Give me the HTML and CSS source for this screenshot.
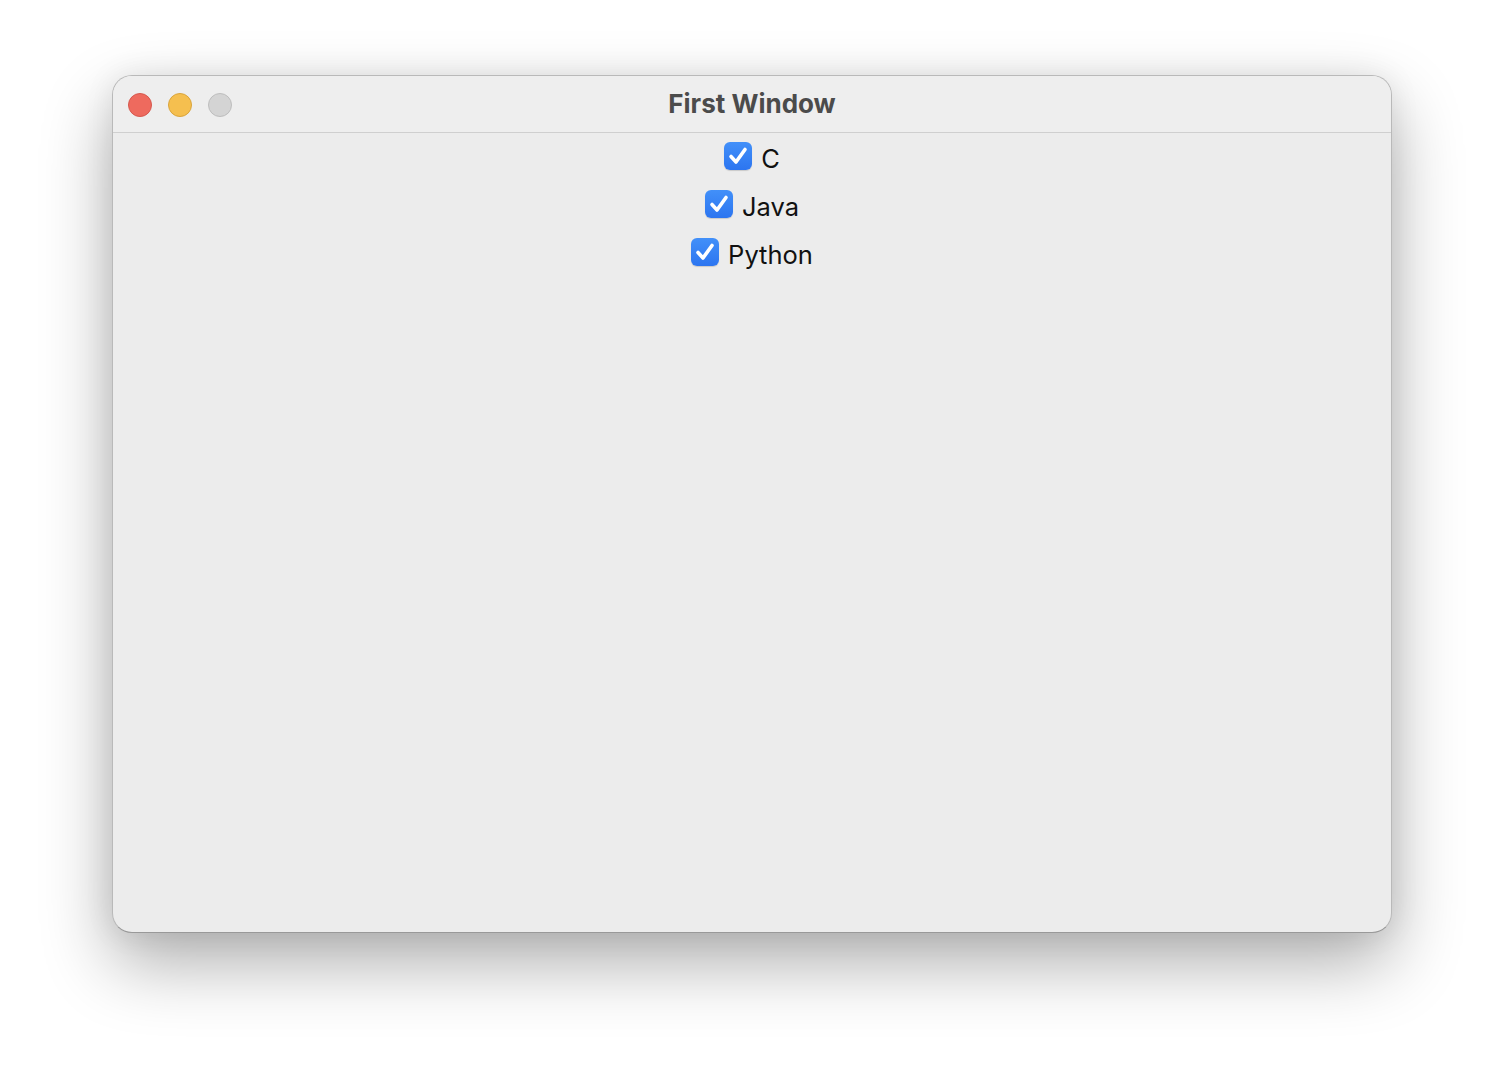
FILE: index.html
```html
<!DOCTYPE html>
<html lang="en">
<head>
    <meta charset="UTF-8">
    <title>First Window</title>
    <link rel="stylesheet" href="styles.css">
</head>
<body>
    <div class="window">
        <div class="titlebar">
            <div class="lights">
                <span class="light close"></span>
                <span class="light min"></span>
                <span class="light zoom"></span>
            </div>
            <div class="title">First Window</div>
        </div>
        <div class="content">
            <label class="check">
                <span class="box"><svg viewBox="0 0 28 28" width="28" height="28"><path d="M7 14.5 L12 20 L21 7.5" fill="none" stroke="#fff" stroke-width="3.6" stroke-linecap="round" stroke-linejoin="round"/></svg></span>
                <span class="label">C</span>
            </label>
            <label class="check">
                <span class="box"><svg viewBox="0 0 28 28" width="28" height="28"><path d="M7 14.5 L12 20 L21 7.5" fill="none" stroke="#fff" stroke-width="3.6" stroke-linecap="round" stroke-linejoin="round"/></svg></span>
                <span class="label">Java</span>
            </label>
            <label class="check">
                <span class="box"><svg viewBox="0 0 28 28" width="28" height="28"><path d="M7 14.5 L12 20 L21 7.5" fill="none" stroke="#fff" stroke-width="3.6" stroke-linecap="round" stroke-linejoin="round"/></svg></span>
                <span class="label">Python</span>
            </label>
        </div>
    </div>
</body>
</html>
```

FILE: styles.css
```css
html, body {
    margin: 0;
    padding: 0;
    background-color: #fff;
    font-family: "Inter", "Liberation Sans", Arial, sans-serif;
}

body {
    padding: 75px 112px 0;
    height: 1080px;
    box-sizing: border-box;
}

.window {
    height: 858px;
    background-color: #ececec;
    border: 1px solid #b9b9b9;
    border-bottom-color: #999;
    border-radius: 20px;
    box-sizing: border-box;
    overflow: hidden;
    box-shadow: 0 30px 70px rgba(0, 0, 0, 0.32), 0 0 30px rgba(0, 0, 0, 0.08);
}

.titlebar {
    height: 57px;
    background-color: #eeeeee;
    border-bottom: 1px solid #cfcfcf;
    box-sizing: border-box;
    display: flex;
    align-items: center;
    position: relative;
}

.lights {
    display: flex;
    gap: 16px;
    padding-left: 15px;
    padding-top: 1px;
}

.light {
    width: 24px;
    height: 24px;
    border-radius: 50%;
    box-sizing: border-box;
}

.light.close {
    background-color: #ee6a5e;
    border: 1px solid #d5584e;
}

.light.min {
    background-color: #f5bf4f;
    border: 1px solid #d9a43c;
}

.light.zoom {
    background-color: #d4d4d4;
    border: 1px solid #bdbdbd;
}

.title {
    position: absolute;
    left: 0;
    right: 0;
    top: 0;
    bottom: 2px;
    display: flex;
    align-items: center;
    justify-content: center;
    font-size: 26px;
    font-weight: 700;
    color: #4b4b4b;
    pointer-events: none;
}

.content {
    display: flex;
    flex-direction: column;
    align-items: center;
    padding-top: 9px;
    gap: 20px;
}

.check {
    display: flex;
    align-items: center;
    gap: 9px;
    height: 28px;
}

.box {
    width: 28px;
    height: 28px;
    border-radius: 6px;
    background: linear-gradient(#4290f9, #2c75f0);
    box-shadow: 0 1px 1px rgba(0, 0, 0, 0.15);
    display: block;
}

.box svg {
    display: block;
}

.label {
    font-size: 25.5px;
    color: #111;
    padding-top: 5px;
}
```
